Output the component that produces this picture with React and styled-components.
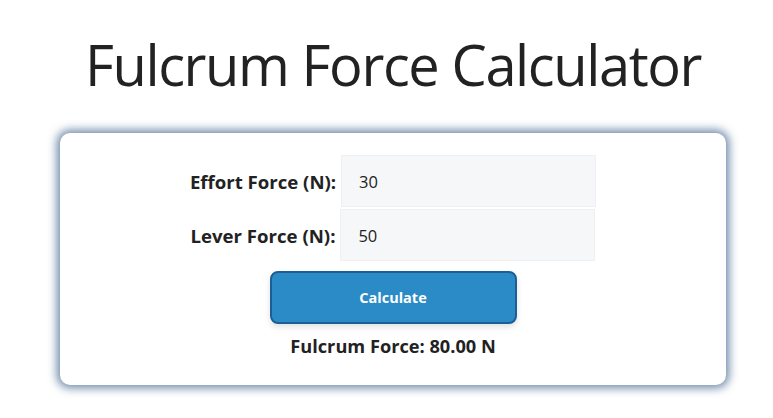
import React, { useState } from 'react';
import styled, { createGlobalStyle } from 'styled-components';

const GlobalStyle = createGlobalStyle`
	html, body {
		margin: 0;
		padding: 0;
		background: #fff;
	}
	body {
		font-family: 'Open Sans', 'Noto Sans', sans-serif;
		color: #222;
	}
`;

const Page = styled.main`
	width: 773px;
	height: 418px;
	overflow: hidden;
	padding: 22px 47px 0 60px;
	box-sizing: border-box;
`;

const Title = styled.h1`
	margin: 0 0 26px;
	font-size: 56px;
	font-weight: 400;
	letter-spacing: -1.4px;
	line-height: 85px;
	white-space: nowrap;
	text-align: center;
	color: #222;
`;

const Card = styled.section`
	width: 666px;
	height: 252px;
	box-sizing: border-box;
	padding: 22px 0 0;
	background: #fff;
	border-radius: 10px;
	box-shadow: 0 0 10px 3px rgba(72, 106, 146, 0.8);
	display: flex;
	flex-direction: column;
	align-items: center;
`;

const Row = styled.div`
	display: flex;
	align-items: center;
	justify-content: center;
	margin-bottom: 2px;
`;

const Label = styled.label`
	font-size: 18.6px;
	font-weight: 700;
	color: #222;
	margin-right: 5px;
`;

const Input = styled.input`
	width: 255px;
	height: 52px;
	box-sizing: border-box;
	padding: 0 17px;
	border: 1px solid #eef0f3;
	background: #f6f7f9;
	font-family: inherit;
	font-size: 16.5px;
	color: #222;
	outline: none;
`;

const Button = styled.button`
	margin-top: 8px;
	width: 247px;
	height: 53px;
	border: 2px solid #1c5e96;
	border-radius: 8px;
	background: #2a8bc6;
	color: #fff;
	font-family: inherit;
	font-size: 14.5px;
	font-weight: 700;
	box-shadow: 0 3px 6px rgba(0, 0, 0, 0.12);
	cursor: pointer;
`;

const Result = styled.p`
	margin: 10px 0 0;
	font-size: 18.2px;
	font-weight: 700;
	color: #222;
`;

const FIELDS = [
	{ id: 'effort', label: 'Effort Force (N):' },
	{ id: 'lever', label: 'Lever Force (N):' },
];

const App = () => {
	const [values, setValues] = useState({ effort: '30', lever: '50' });
	const [result, setResult] = useState(80);

	const calculate = () => {
		setResult((parseFloat(values.effort) || 0) + (parseFloat(values.lever) || 0));
	};

	return (
		<>
			<GlobalStyle />
			<Page>
				<Title>Fulcrum Force Calculator</Title>
				<Card>
					{FIELDS.map((f) => (
						<Row key={f.id}>
							<Label htmlFor={f.id}>{f.label}</Label>
							<Input
								id={f.id}
								type='text'
								value={values[f.id]}
								onChange={(e) => setValues({ ...values, [f.id]: e.target.value })}
							/>
						</Row>
					))}
					<Button type='button' onClick={calculate}>Calculate</Button>
					<Result>{`Fulcrum Force: ${result.toFixed(2)} N`}</Result>
				</Card>
			</Page>
		</>
	);
};

export default App;
